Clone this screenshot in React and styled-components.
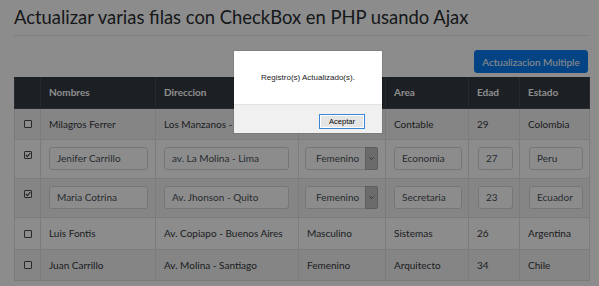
import React from 'react';
import styled, { createGlobalStyle } from 'styled-components';

const GlobalStyle = createGlobalStyle`
  html, body {
    margin: 0;
    background: #fff;
    font-family: Lato, "Open Sans", sans-serif;
    color: #212529;
  }
`;

const Page = styled.div`
  position: relative;
  width: 599px;
  height: 286px;
  overflow: hidden;
  padding: 0 10px 0 14px;
  box-sizing: border-box;
`;

const Title = styled.h1`
  margin: 0;
  padding-top: 6px;
  font-size: 18.4px;
  font-weight: 400;
  line-height: 22px;
  color: #2a2d31;
`;

const Rule = styled.hr`
  margin: 7px 0 0;
  border: 0;
  border-top: 1px solid rgba(0, 0, 0, 0.1);
`;

const Toolbar = styled.div`
  display: flex;
  justify-content: flex-end;
  padding: 14px 1px 4px 0;
`;

const PrimaryButton = styled.button`
  height: 23px;
  width: 114px;
  padding: 0;
  border: 1px solid #0a7cf0;
  border-radius: 3px;
  background: #0a7cf0;
  color: #fff;
  font-family: Lato, sans-serif;
  font-size: 10px;
`;

const Table = styled.table`
  width: 575px;
  table-layout: fixed;
  border-collapse: collapse;
  font-size: 10px;
  line-height: 15px;
  color: #33373b;
`;

const HeadCell = styled.th`
  height: 31px;
  box-sizing: border-box;
  padding: 0 8px;
  background: #343a40;
  color: #fff;
  text-align: left;
  font-weight: 700;
  border: 1px solid #454d55;
  border-top: 0;
`;

const Row = styled.tr`
  background: ${p => (p.$odd ? 'rgba(0,0,0,0.05)' : '#fff')};
`;

const Cell = styled.td`
  padding: ${p => (p.$edit ? '7px 8px 8px' : '8px 8px 7px')};
  border: 1px solid #dee2e6;
  vertical-align: top;
  white-space: nowrap;
  overflow: hidden;
`;

const CheckCell = styled(Cell)`
  padding-left: 0;
  padding-right: 0;
  text-align: center;
`;

const CheckWrap = styled.span`
  display: inline-flex;
  align-items: center;
  height: 15px;
`;

const Box = styled.span`
  display: inline-flex;
  align-items: center;
  justify-content: center;
  width: 8px;
  height: 8px;
  border: 1px solid #4a4a4a;
  border-radius: 1px;
  background: #fff;
  box-sizing: border-box;
`;

const Field = styled.div`
  width: ${p => p.$w}px;
  height: 23px;
  box-sizing: border-box;
  margin-left: ${p => p.$shift || 0}px;
  padding: 0 7px;
  border: 1px solid #d4d9de;
  border-radius: 3px;
  background: #fff;
  color: #495057;
  font-size: 10px;
  line-height: 21px;
`;

const SelectField = styled(Field)`
  display: flex;
  justify-content: space-between;
  padding: 0 0 0 10px;
  margin-left: -2px;
`;

const Arrow = styled.span`
  width: 11px;
  margin: -1px -1px -1px 0;
  background: #c4c4c4;
  border: 1px solid #a9a9a9;
  border-radius: 0 2px 2px 0;
  display: flex;
  align-items: center;
  justify-content: center;
`;

const Overlay = styled.div`
  position: absolute;
  inset: 0;
  background: rgba(0, 0, 0, 0.45);
`;

const Dialog = styled.div`
  position: absolute;
  left: 234px;
  top: 51px;
  width: 148px;
  background: #fff;
  box-shadow: 0 0 0 1px rgba(0, 0, 0, 0.08);
  font-family: "Liberation Sans", Arial, sans-serif;
  color: #222;
`;

const Message = styled.div`
  height: 53px;
  display: flex;
  align-items: center;
  justify-content: center;
  font-size: 8px;
`;

const DialogFooter = styled.div`
  display: flex;
  justify-content: flex-end;
  padding: 9px 17px 4px 0;
  background: #f0f0f0;
  border-top: 1px solid #e3e3e3;
`;

const DialogButton = styled.button`
  width: 46px;
  height: 15px;
  padding: 0;
  border: 1px solid #3c86d6;
  background: #e5e5e5;
  box-shadow: inset 0 0 0 1px #fff;
  font-family: "Liberation Sans", Arial, sans-serif;
  font-size: 7.5px;
  color: #000;
`;

const cols = [26, 115, 143, 87, 83, 51, 70];
const heads = ['', 'Nombres', 'Direccion', 'Sexo', 'Area', 'Edad', 'Estado'];

const rows = [
  { on: false, d: ['Milagros Ferrer', 'Los Manzanos - Lima', 'Femenino', 'Contable', '29', 'Colombia'] },
  { on: true, d: ['Jenifer Carrillo', 'av. La Molina - Lima', 'Femenino', 'Economia', '27', 'Peru'] },
  { on: true, d: ['Maria Cotrina', 'Av. Jhonson - Quito', 'Femenino', 'Secretaria', '23', 'Ecuador'] },
  { on: false, d: ['Luis Fontis', 'Av. Copiapo - Buenos Aires', 'Masculino', 'Sistemas', '26', 'Argentina'] },
  { on: false, d: ['Juan Carrillo', 'Av. Molina - Santiago', 'Femenino', 'Arquitecto', '34', 'Chile'] },
];

const fieldWidths = [99, 125, 73, 68, 35, 54];
const fieldShift = [0, 0, 0, 0, 1, 1];

const Check = ({ on }) => (
  <CheckWrap>
    <Box>
      {on && (
        <svg width="6" height="6" viewBox="0 0 6 6">
          <path d="M0.8 3 L2.4 4.6 L5.3 1.2" fill="none" stroke="#444" strokeWidth="1.1" />
        </svg>
      )}
    </Box>
  </CheckWrap>
);

const App = () => {
  return (
    <>
      <GlobalStyle />
      <Page>
        <Title>Actualizar varias filas con CheckBox en PHP usando Ajax</Title>
        <Rule />
        <Toolbar>
          <PrimaryButton>Actualizacion Multiple</PrimaryButton>
        </Toolbar>
        <Table>
          <colgroup>
            {cols.map((w, i) => <col key={i} style={{ width: w }} />)}
          </colgroup>
          <thead>
            <tr>
              {heads.map((h, i) => <HeadCell key={i}>{h}</HeadCell>)}
            </tr>
          </thead>
          <tbody>
            {rows.map((r, i) => (
              <Row key={i} $odd={i % 2 === 0}>
                <CheckCell $edit={r.on}>
                  <Check on={r.on} />
                </CheckCell>
                {r.d.map((v, j) => (
                  <Cell key={j} $edit={r.on}>
                    {!r.on && v}
                    {r.on && j === 2 && (
                      <SelectField $w={fieldWidths[j]}>
                        {v}
                        <Arrow>
                          <svg width="5" height="3" viewBox="0 0 5 3">
                            <path d="M0.5 0.5 L2.5 2.5 L4.5 0.5" fill="none" stroke="#555" strokeWidth="0.9" />
                          </svg>
                        </Arrow>
                      </SelectField>
                    )}
                    {r.on && j !== 2 && (
                      <Field $w={fieldWidths[j]} $shift={fieldShift[j]}>{v}</Field>
                    )}
                  </Cell>
                ))}
              </Row>
            ))}
          </tbody>
        </Table>
        <Overlay />
        <Dialog>
          <Message>Registro(s) Actualizado(s).</Message>
          <DialogFooter>
            <DialogButton>Aceptar</DialogButton>
          </DialogFooter>
        </Dialog>
      </Page>
    </>
  );
};

export default App;
